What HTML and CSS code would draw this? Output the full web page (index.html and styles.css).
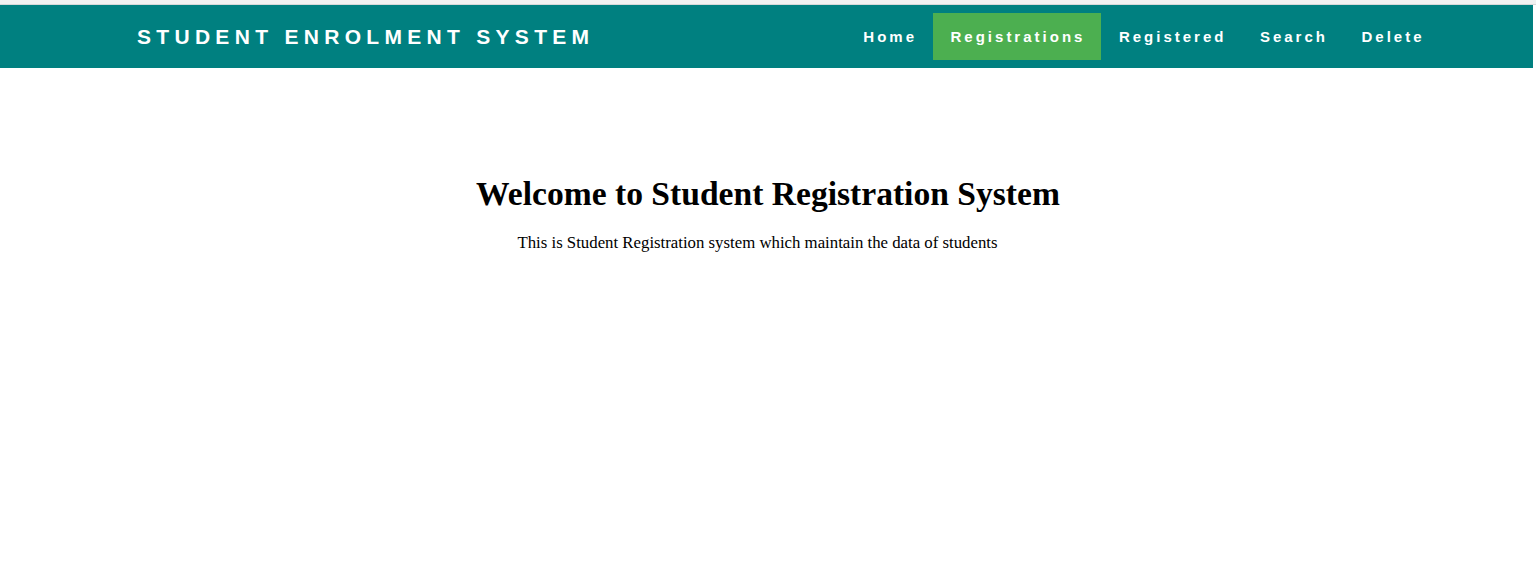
FILE: index.html
```html
<!DOCTYPE html>
<html lang="en">
<head>
<meta charset="utf-8">
<title>Student Enrolment System</title>
<link rel="stylesheet" href="styles.css">
</head>
<body>
<div class="topstrip"></div>
<header class="header">
  <div class="brand">STUDENT ENROLMENT SYSTEM</div>
  <nav class="nav">
    <a class="nav-link" href="#">Home</a>
    <a class="nav-link active" href="#">Registrations</a>
    <a class="nav-link" href="#">Registered</a>
    <a class="nav-link" href="#">Search</a>
    <a class="nav-link" href="#">Delete</a>
  </nav>
</header>
<main class="main">
  <h1 class="title">Welcome to Student Registration System</h1>
  <p class="lead">This is Student Registration system which maintain the data of students</p>
</main>
</body>
</html>
```
FILE: styles.css
```css
html, body {
  margin: 0;
  padding: 0;
  background: #ffffff;
}
body {
  font-family: "Liberation Serif", "Times New Roman", serif;
  color: #000;
}
.topstrip {
  height: 4px;
  background: #f1f1f1;
  border-bottom: 1px solid #d8d8d8;
}
.header {
  height: 63px;
  background: #008080;
  display: flex;
  align-items: center;
  justify-content: space-between;
  padding: 0 93px 0 137px;
  margin-right: 3px;
  box-sizing: border-box;
}
.brand {
  font-family: "Liberation Sans", Arial, sans-serif;
  font-weight: bold;
  font-size: 21px;
  letter-spacing: 5.3px;
  color: #ffffff;
}
.nav {
  display: flex;
  align-items: center;
}
.nav-link {
  font-family: "Liberation Sans", Arial, sans-serif;
  font-weight: bold;
  font-size: 15px;
  letter-spacing: 3px;
  color: #ffffff;
  text-decoration: none;
  padding: 15px 15.5px 15px 18px;
}
.nav-link.active {
  background: #4caf50;
}
.main {
  text-align: center;
  padding-top: 107px;
}
.title {
  font-size: 33.6px;
  font-weight: bold;
  margin: 0 0 20px 0;
}
.lead {
  font-size: 16.8px;
  margin: 0;
  padding-right: 21px;
}
```
